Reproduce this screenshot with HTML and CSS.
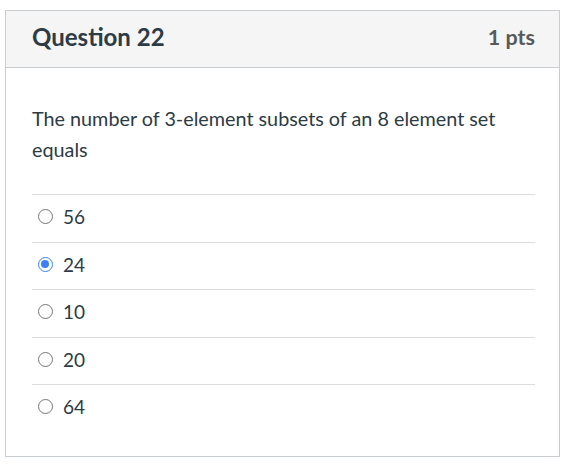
FILE: index.html
```html
<!DOCTYPE html>
<html>
<head>
<meta charset="utf-8">
<link rel="stylesheet" href="styles.css">
</head>
<body>
<div class="card">
  <div class="header">
    <div class="title">Question 22</div>
    <div class="pts">1 pts</div>
  </div>
  <div class="body">
    <p class="question">The number of 3-element subsets of an 8 element set equals</p>
    <div class="answers">
      <label class="answer"><span class="radio"></span><span class="label">56</span></label>
      <label class="answer"><span class="radio checked"></span><span class="label">24</span></label>
      <label class="answer"><span class="radio"></span><span class="label">10</span></label>
      <label class="answer"><span class="radio"></span><span class="label">20</span></label>
      <label class="answer"><span class="radio"></span><span class="label">64</span></label>
    </div>
  </div>
</div>
</body>
</html>
```

FILE: styles.css
```css
html, body {
  margin: 0;
  padding: 0;
  background: #fff;
}
body {
  padding: 10px 7px 0 5px;
  font-family: Lato, "Liberation Sans", sans-serif;
  color: #2d3b45;
}
.card {
  width: 555px;
  height: 447px;
  border: 1px solid #c7cdd1;
  box-sizing: border-box;
  display: flex;
  flex-direction: column;
}
.header {
  height: 57px;
  box-sizing: border-box;
  background: #f5f5f5;
  border-bottom: 1px solid #c7cdd1;
  display: flex;
  align-items: center;
  justify-content: space-between;
  padding: 0 24px 5px 26px;
}
.title {
  font-size: 24px;
  font-weight: 700;
  color: #2d3b45;
}
.pts {
  font-size: 21.5px;
  font-weight: 700;
  color: #58595b;
}
.body {
  padding: 0 24px 0 26px;
}
.question {
  margin: 35px 0 0;
  font-size: 19.8px;
  line-height: 31px;
}
.answers {
  margin-top: 29px;
}
.answer {
  display: flex;
  align-items: center;
  height: 47.5px;
  padding-bottom: 3px;
  border-top: 1px solid #dadcdd;
  box-sizing: border-box;
  font-size: 19px;
}
.radio {
  width: 15px;
  height: 15px;
  border: 1px solid #767676;
  border-radius: 50%;
  margin-left: 6px;
  margin-right: 10px;
  box-sizing: border-box;
  position: relative;
  flex: none;
}
.radio.checked {
  border: 1.5px solid #3b82f6;
}
.radio.checked::after {
  content: "";
  position: absolute;
  left: 2px;
  top: 2px;
  width: 8px;
  height: 8px;
  border-radius: 50%;
  background: #3b82f6;
}
.label {
  color: #2d3b45;
}
```
